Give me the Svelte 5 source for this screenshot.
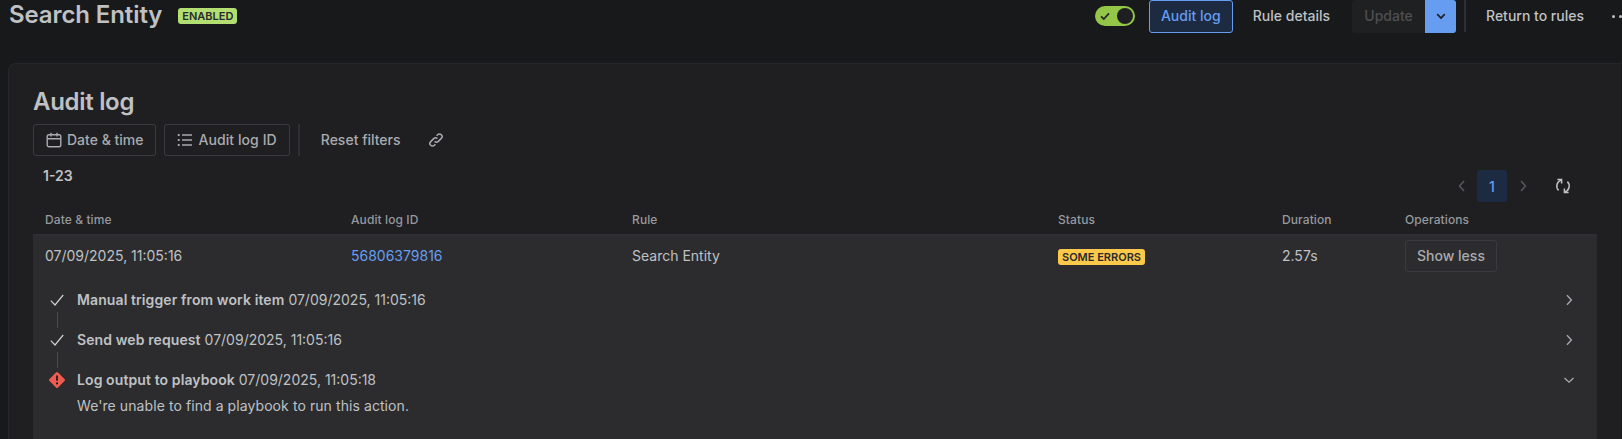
<script>
  const columns = ['Date & time', 'Audit log ID', 'Rule', 'Status', 'Duration', 'Operations'];
  const steps = [
    { name: 'Manual trigger from work item', time: '07/09/2025, 11:05:16', state: 'ok' },
    { name: 'Send web request', time: '07/09/2025, 11:05:16', state: 'ok' },
    { name: 'Log output to playbook', time: '07/09/2025, 11:05:18', state: 'error', message: "We're unable to find a playbook to run this action." }
  ];
</script>

<div class="page">
  <header class="topbar">
    <div class="heading">
      <h1>Search Entity</h1>
      <span class="lozenge lime">ENABLED</span>
    </div>
    <div class="actions">
      <span class="toggle">
        <svg width="12" height="12" viewBox="0 0 12 12" fill="none"><path d="M2 6.3 4.8 9 10 3.4" stroke="#292a2e" stroke-width="1.8"/></svg>
        <span class="knob"></span>
      </span>
      <button class="btn selected">Audit log</button>
      <button class="btn flat details">Rule details</button>
      <span class="split">
        <button class="btn update">Update</button>
        <button class="btn more" aria-label="More">
          <svg width="12" height="12" viewBox="0 0 12 12" fill="none"><path d="M2.2 4.2 6 8l3.8-3.8" stroke="#1f1f21" stroke-width="1.7"/></svg>
        </button>
      </span>
      <span class="divider"></span>
      <button class="btn flat">Return to rules</button>
      <span class="dots"><i></i><i></i><i></i></span>
    </div>
  </header>

  <main class="card">
    <h2>Audit log</h2>
    <div class="filters">
      <button class="btn outline">
        <svg width="16" height="16" viewBox="0 0 16 16" fill="none" stroke="currentColor" stroke-width="1.4"><rect x="1.2" y="2.7" width="13.6" height="12" rx="1.8"/><path d="M1.2 6.8h13.6M5 .8v3.6M11 .8v3.6"/></svg>
        Date &amp; time
      </button>
      <button class="btn outline">
        <svg width="16" height="16" viewBox="0 0 16 16" fill="none" stroke="currentColor" stroke-width="1.4"><path d="M5 3h10M5 8h10M5 13h10"/><path d="M.8 3h1.8M.8 8h1.8M.8 13h1.8" stroke-width="1.8"/></svg>
        Audit log ID
      </button>
      <span class="divider"></span>
      <button class="btn flat reset">Reset filters</button>
      <svg class="link" width="16" height="16" viewBox="0 0 16 16" fill="none" stroke="currentColor" stroke-width="1.5"><path d="M6.6 9.4a2.6 2.6 0 0 0 3.7 0l3-3a2.6 2.6 0 0 0-3.7-3.7l-1 1"/><path d="M9.4 6.6a2.6 2.6 0 0 0-3.7 0l-3 3a2.6 2.6 0 0 0 3.7 3.7l1-1"/></svg>
    </div>

    <div class="summary">
      <strong>1-23</strong>
      <div class="pager">
        <svg width="16" height="16" viewBox="0 0 16 16" fill="none" stroke="#55565b" stroke-width="1.6"><path d="M10 3 5.5 8l4.5 5"/></svg>
        <span class="page-num">1</span>
        <svg width="16" height="16" viewBox="0 0 16 16" fill="none" stroke="#55565b" stroke-width="1.6"><path d="M6 3l4.5 5L6 13"/></svg>
        <svg class="refresh" width="16" height="16" viewBox="0 0 16 16" fill="none" stroke="#bfc1c4" stroke-width="1.5"><path d="M3.6 12.4A6.2 6.2 0 0 1 6.2 2.1"/><path d="M12.4 3.6A6.2 6.2 0 0 1 9.8 13.9"/><path d="M2.4 1.4h4.2v4.2"/><path d="M13.6 14.6H9.4v-4.2"/></svg>
      </div>
    </div>

    <div class="row head">
      {#each columns as col}
        <span>{col}</span>
      {/each}
    </div>

    <section class="expanded">
      <div class="row body">
        <span>07/09/2025, 11:05:16</span>
        <a href="#top">56806379816</a>
        <span>Search Entity</span>
        <span><span class="lozenge yellow">SOME ERRORS</span></span>
        <span>2.57s</span>
        <span><button class="btn outline less">Show less</button></span>
      </div>

      <ol class="steps">
        {#each steps as step, i}
          <li class="step">
            <span class="marker">
              {#if step.state === 'ok'}
                <svg width="16" height="16" viewBox="0 0 16 16" fill="none" stroke="#cecfd2" stroke-width="1.2"><path d="M1.8 8.6 6 13 14.2 3"/></svg>
              {:else}
                <svg width="16" height="16" viewBox="0 0 16 16"><path d="M8 1.6 14.4 8 8 14.4 1.6 8z" fill="#f15b50" stroke="#f15b50" stroke-width="3" stroke-linejoin="round"/><path d="M8 3.6v5.2" stroke="#1f1f21" stroke-width="1.8"/><circle cx="8" cy="11.4" r="1.1" fill="#1f1f21"/></svg>
              {/if}
              {#if i < steps.length - 1}<span class="line"></span>{/if}
            </span>
            <div class="step-text">
              <p><b>{step.name}</b> {step.time}</p>
              {#if step.message}<p class="message">{step.message}</p>{/if}
            </div>
            <svg class="caret" width="12" height="12" viewBox="0 0 12 12" fill="none" stroke="#a9abaf" stroke-width="1.3">
              {#if step.message}
                <path d="M1.5 4 6 8.2 10.5 4"/>
              {:else}
                <path d="M4 1.2 8.4 6 4 10.8"/>
              {/if}
            </svg>
          </li>
        {/each}
      </ol>
    </section>
  </main>
</div>

<style>
  :global(body) {
    margin: 0;
    background: #18191a;
    overflow: hidden;
  }
  .page {
    height: 439px;
    overflow: hidden;
    font: 14px/20px Inter, "Liberation Sans", sans-serif;
    color: #bfc1c4;
    background: #18191a;
  }
  .topbar {
    display: flex;
    justify-content: space-between;
    height: 33px;
    margin-bottom: 30px;
    padding-left: 9px;
  }
  .heading {
    display: flex;
    align-items: center;
    gap: 16px;
    height: 32px;
  }
  h1 {
    margin: 0 0 2px;
    font-size: 24px;
    line-height: 32px;
    font-weight: 600;
    letter-spacing: -0.1px;
  }
  h2 {
    margin: 0;
    font-size: 24px;
    line-height: 32px;
    font-weight: 600;
    letter-spacing: -0.3px;
  }
  .lozenge {
    display: inline-block;
    padding: 0 4px;
    border-radius: 3px;
    font-size: 11px;
    line-height: 16px;
    font-weight: 600;
    color: #292a2e;
  }
  .lime { background: #b3df72; }
  .yellow { background: #fdc94a; }
  .actions {
    display: flex;
    align-items: center;
    height: 32px;
    margin-right: -7px;
  }
  .toggle {
    box-sizing: border-box;
    display: flex;
    align-items: center;
    justify-content: space-between;
    width: 40px;
    height: 20px;
    padding: 0 2px 0 4px;
    border-radius: 10px;
    background: #94c748;
    margin-right: 14px;
  }
  .knob {
    width: 16px;
    height: 16px;
    border-radius: 50%;
    background: #1f1f21;
  }
  .btn {
    font: inherit;
    font-weight: 500;
    color: #bfc1c4;
    height: 32px;
    border: 0;
    background: none;
    border-radius: 3px;
    padding: 0 12px;
    white-space: nowrap;
  }
  .selected {
    width: 84px;
    padding: 0;
    height: 33px;
    color: #669df1;
    background: #1c2b42;
    border: 1px solid #669df1;
  }
  .details { margin: 0 10px 0 8px; }
  .split {
    display: flex;
    height: 33px;
  }
  .update {
    width: 73px;
    height: 33px;
    padding: 0;
    background: #1f2022;
    color: #4e4f53;
    border-radius: 3px 0 0 3px;
  }
  .more {
    display: flex;
    align-items: center;
    justify-content: center;
    width: 31px;
    height: 33px;
    padding: 0;
    background: #669df1;
    border-radius: 0 3px 3px 0;
  }
  .divider {
    width: 2px;
    height: 32px;
    background: #2e2f32;
  }
  .actions .divider { margin: 0 8px; }
  .dots {
    display: flex;
    gap: 4px;
    margin-left: 16px;
  }
  .dots i {
    width: 3px;
    height: 3px;
    border-radius: 50%;
    background: #bfc1c4;
  }
  .card {
    box-sizing: border-box;
    height: 376px;
    margin: 0 1px 0 8px;
    padding: 22px 24px 0;
    background: #1f1f21;
    border-radius: 8px 0 0 0;
    border-top: 1px solid #26272a;
    border-left: 1px solid #26272a;
  }
  .filters {
    display: flex;
    align-items: center;
    margin-top: 6px;
    height: 32px;
  }
  .outline {
    display: flex;
    align-items: center;
    gap: 5px;
    box-sizing: border-box;
    height: 32px;
    border: 1px solid #3a3b3f;
    padding: 0 12px;
    color: #a9abaf;
  }
  .outline + .outline {
    margin-left: 8px;
    letter-spacing: 0.08px;
  }
  .reset {
    color: #a9abaf;
    padding: 0 9px;
  }
  .filters .divider { margin: 0 12px 0 8px; }
  .link {
    margin-left: 18px;
    color: #a9abaf;
  }
  .summary {
    display: flex;
    justify-content: space-between;
    height: 56px;
    padding-left: 10px;
  }
  .summary strong {
    font-weight: 600;
    margin-top: 10px;
  }
  .pager {
    display: flex;
    align-items: center;
    height: 32px;
    margin-top: 14px;
    padding-right: 26px;
  }
  .page-num {
    box-sizing: border-box;
    width: 30px;
    height: 32px;
    margin: 0 8px 0 7px;
    border-radius: 3px;
    background: #1c2b42;
    color: #669df1;
    text-align: center;
    line-height: 34px;
    font-weight: 500;
  }
  .refresh { margin-left: 24px; }
  .row {
    display: grid;
    grid-template-columns: 306px 281px 426px 224px 123px 1fr;
    padding-left: 12px;
    align-items: center;
  }
  .head {
    box-sizing: border-box;
    height: 24px;
    font-size: 12px;
    line-height: 16px;
    font-weight: 500;
    letter-spacing: 0.1px;
    color: #96999e;
    border-bottom: 2px solid #2e2f32;
    align-items: start;
  }
  .expanded {
    background: #2c2c2e;
    height: 215px;
  }
  .body { height: 39px; }
  .body a {
    color: #669df1;
    text-decoration: none;
  }
  .less {
    width: 92px;
    padding: 0;
    justify-content: center;
  }
  .steps {
    list-style: none;
    margin: 15px 0 0;
    padding: 0;
    display: flex;
    flex-direction: column;
    gap: 20px;
  }
  .step {
    display: grid;
    grid-template-columns: 16px 1fr 12px;
    column-gap: 12px;
    padding: 0 22px 0 16px;
  }
  .marker {
    position: relative;
    display: flex;
    height: 20px;
    align-items: center;
  }
  .line {
    position: absolute;
    left: 8px;
    top: 22px;
    width: 1px;
    height: 16px;
    background: #4b4c50;
  }
  .step-text p { margin: 0; }
  .step-text b {
    font-weight: 600;
    letter-spacing: 0.1px;
  }
  .step-text .message {
    margin-top: 6px;
    letter-spacing: 0.08px;
  }
  .caret { margin-top: 4px; }
</style>
